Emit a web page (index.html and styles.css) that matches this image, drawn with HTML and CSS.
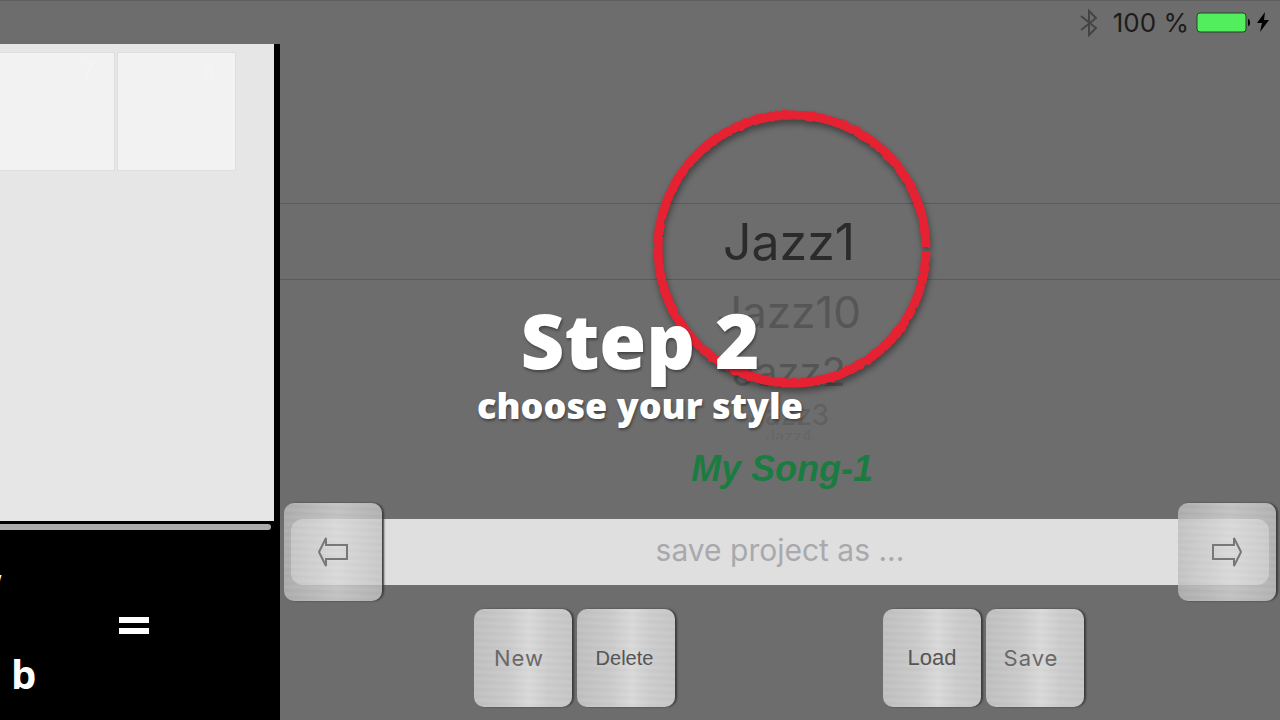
FILE: index.html
```html
<!DOCTYPE html>
<html lang="en">
<head>
  <meta charset="UTF-8">
  <meta name="viewport" content="width=device-width, initial-scale=1">
  <title>Step 2 - choose your style</title>
  <link rel="stylesheet" href="styles.css">
</head>
<body>

  <header class="status-bar">
    <svg class="bluetooth" width="20" height="30" viewBox="0 0 20 30" aria-hidden="true">
      <path d="M2 8 L17 20 L10 27 V3 L17 10 L2 22" />
    </svg>
    <span class="battery-text">100 %</span>
    <svg width="76" height="24" viewBox="0 0 76 24" aria-hidden="true">
      <rect class="battery-fill" x="1" y="2" width="49" height="19" rx="3" />
      <path d="M52 8 q2 0 2 4 q0 3 -2 3 z" />
      <path d="M69 1 L61 12 H66 L64 21 L73 9 H68 Z" />
    </svg>
  </header>

  <main>
    <section class="board">
      <div class="sheet">
        <div class="tile">7</div>
        <div class="tile">8</div>
      </div>
      <div class="scroll-line"></div>
      <div class="chords">
        <span class="tick">’</span>
        <button class="equals" type="button" aria-label="Equals">
          <svg width="30" height="18" viewBox="0 0 30 18" aria-hidden="true">
            <path d="M0 0 H30 V6 H0 Z M0 11 H30 V17 H0 Z" />
          </svg>
        </button>
        <span class="flat">b</span>
      </div>
    </section>

    <section class="project">
      <div class="picker">
        <ul class="styles">
          <li class="selected">Jazz1</li>
          <li class="near">Jazz10</li>
          <li class="mid">Jazz2</li>
          <li class="far">Jazz3</li>
          <li class="last">Jazz4</li>
        </ul>
        <svg class="marker" width="300" height="300" viewBox="0 0 300 300" aria-hidden="true">
          <filter id="rough">
            <feTurbulence type="fractalNoise" baseFrequency="0.2" numOctaves="2" seed="4" />
            <feDisplacementMap in="SourceGraphic" scale="3" xChannelSelector="R" yChannelSelector="G" />
            <feGaussianBlur stdDeviation="0.5" />
          </filter>
          <path filter="url(#rough)" d="M284 153 A134 134 0 1 1 284 149" />
        </svg>
      </div>

      <h2 class="song">My Song-1</h2>

      <form class="save-row">
        <input type="text" aria-label="Project name" placeholder="save project as ...">
        <button class="metal prev" type="button" aria-label="Previous">
          <svg width="32" height="32" viewBox="0 0 32 32" aria-hidden="true">
            <path d="M2 16 L9 2 V9 H30 V23 H9 V30 Z" />
          </svg>
        </button>
        <button class="metal next" type="button" aria-label="Next">
          <svg width="32" height="32" viewBox="0 0 32 32" aria-hidden="true">
            <path d="M30 16 L23 2 V9 H2 V23 H23 V30 Z" />
          </svg>
        </button>
      </form>

      <div class="actions">
        <div class="pair">
          <button class="metal" type="button">New</button>
          <button class="metal tight small" type="button">Delete</button>
        </div>
        <div class="pair">
          <button class="metal tight" type="button">Load</button>
          <button class="metal" type="button">Save</button>
        </div>
      </div>
    </section>
  </main>

  <div class="caption">
    <h1>Step 2</h1>
    <p>choose your style</p>
  </div>

</body>
</html>
```
FILE: styles.css
```css
* {
  box-sizing: border-box;
}

body {
  margin: 0;
  min-height: 100vh;
  position: relative;
  display: flex;
  flex-direction: column;
  overflow: hidden;
  background-color: #6d6d6d;
  font-family: Inter, "Liberation Sans", sans-serif;
}

h1, h2, p, ul {
  margin: 0;
  padding: 0;
}

/* Status bar */
.status-bar {
  height: 44px;
  padding: 0 8px 0 0;
  display: flex;
  justify-content: flex-end;
  align-items: center;
  border-top: 1px solid #606060;
}

.bluetooth path {
  fill: none;
  stroke: #444;
  stroke-width: 2;
}

.battery-text {
  margin: 0 7px 0 14px;
  font-size: 26px;
  color: #1c1c1c;
}

.battery-fill {
  fill: #53ee5d;
  stroke: #1f4a22;
  stroke-width: 1;
}

main {
  flex: 1;
  display: flex;
}

/* Left board */
.board {
  width: 280px;
  flex-shrink: 0;
  display: flex;
  flex-direction: column;
  overflow: hidden;
  background-color: #000;
}

.sheet {
  flex: 1;
  margin-right: 6px;
  padding: 8px 38px 0 0;
  display: flex;
  justify-content: flex-end;
  gap: 2px;
  background-color: #e6e6e6;
}

.tile {
  width: 119px;
  height: 119px;
  flex-shrink: 0;
  padding: 6px 20px;
  border: 1px solid #dedede;
  background-color: #f2f2f2;
  color: #f5f5f5;
  font-size: 20px;
  text-align: right;
}

.scroll-line {
  height: 6px;
  margin: 3px 9px 0 0;
  border-radius: 0 3px 3px 0;
  background-color: #ababab;
}

.chords {
  height: 190px;
  padding-top: 40px;
  color: #fff;
  font-weight: bold;
}

.tick {
  display: block;
  height: 47px;
  margin-left: -5px;
  font-size: 24px;
}

.equals {
  display: block;
  margin-left: 119px;
  padding: 0;
  border: 0;
  background: none;
}

.equals svg {
  display: block;
  fill: #fff;
}

.flat {
  display: block;
  margin: 12px 0 0 11px;
  font-family: "Open Sans", sans-serif;
  font-size: 40px;
  line-height: 54px;
}

/* Right side */
.project {
  flex: 1;
  display: flex;
  flex-direction: column;
}

.picker {
  flex: 1;
  position: relative;
  padding-top: 159px;
}

.styles {
  list-style: none;
  text-align: center;
}

.styles li {
  padding-left: 18px;
  overflow: hidden;
}

.styles .selected {
  height: 77px;
  border-top: 1px solid #5a5a5a;
  border-bottom: 1px solid #5a5a5a;
  font-size: 50px;
  line-height: 77px;
  color: #2b2b2b;
}

.styles .near {
  font-size: 44px;
  line-height: 64px;
  color: #565656;
}

.styles .mid {
  font-size: 40px;
  line-height: 56px;
  color: #555;
}

.styles .far {
  font-size: 28px;
  line-height: 30px;
  color: #606060;
}

.styles .last {
  height: 10px;
  font-size: 16px;
  line-height: 12px;
  color: #666;
}

.marker {
  position: absolute;
  left: calc(50% - 138px);
  top: 54px;
  fill: none;
  stroke: #e62233;
  stroke-width: 9;
  filter: drop-shadow(1px 4px 3px rgba(0, 0, 0, 0.4));
}

.song {
  margin-bottom: 12px;
  padding-left: 4px;
  font-family: "Liberation Sans", sans-serif;
  font-size: 36px;
  font-style: italic;
  line-height: 44px;
  text-align: center;
  color: #1b7c42;
}

.save-row {
  margin: 0 4px;
  display: grid;
  grid-template-columns: 98px 1fr 98px;
  align-items: center;
}

.save-row input {
  grid-area: 1 / 1 / 2 / 4;
  width: auto;
  min-width: 0;
  height: 66px;
  margin: 0 7px;
  padding: 0 0 5px;
  border: 0;
  border-radius: 12px;
  background-color: #dfdfdf;
  font-family: inherit;
  font-size: 30px;
  text-align: center;
}

.save-row input::placeholder {
  color: #a9a9ad;
}

.prev {
  grid-area: 1 / 1;
}

.next {
  grid-area: 1 / 3;
}

/* Brushed metal buttons */
.metal {
  width: 98px;
  height: 98px;
  padding: 0 8px 0 0;
  border: 0;
  border-radius: 10px;
  background: repeating-linear-gradient(2deg, rgba(255, 255, 255, 0.04), rgba(0, 0, 0, 0.02) 4px, rgba(255, 255, 255, 0.04) 7px),
    linear-gradient(90deg, #c0c0c0, #cbcbcb 35%, #dadada 56%, #cdcdcd 75%, #c6c6c6);
  box-shadow: 2px 0 2px #3c3c3c;
  font-family: inherit;
  font-size: 22px;
  letter-spacing: 1px;
  color: #696969;
}

.metal.tight {
  padding: 0;
  font-family: "Liberation Sans", sans-serif;
  letter-spacing: 0;
  color: #555;
}

.metal.small {
  padding-right: 3px;
  font-size: 20px;
}

.save-row .metal {
  padding: 0;
  background: repeating-linear-gradient(2deg, rgba(255, 255, 255, 0.04), rgba(0, 0, 0, 0.02) 4px, rgba(255, 255, 255, 0.04) 7px),
    linear-gradient(90deg, rgba(190, 190, 190, 0.8), rgba(217, 217, 217, 0.8) 54%, rgba(196, 196, 196, 0.8));
}

.save-row svg {
  display: block;
  margin: 0 auto;
  fill: none;
  stroke: #777;
  stroke-width: 2;
}

.actions {
  margin: 8px 2px 13px 0;
  display: flex;
  justify-content: center;
  gap: 208px;
}

.pair {
  display: flex;
  gap: 5px;
}

/* Caption over the app */
.caption {
  position: absolute;
  top: 298px;
  left: 0;
  right: 0;
  text-align: center;
  color: #fff;
  font-family: "Open Sans", Lato, sans-serif;
  font-weight: 800;
  text-shadow: 1px 2px 3px rgba(0, 0, 0, 0.4);
  pointer-events: none;
}

.caption h1 {
  font-size: 76px;
  font-weight: 800;
  line-height: 84px;
}

.caption p {
  font-size: 36px;
  line-height: 48px;
}
```
